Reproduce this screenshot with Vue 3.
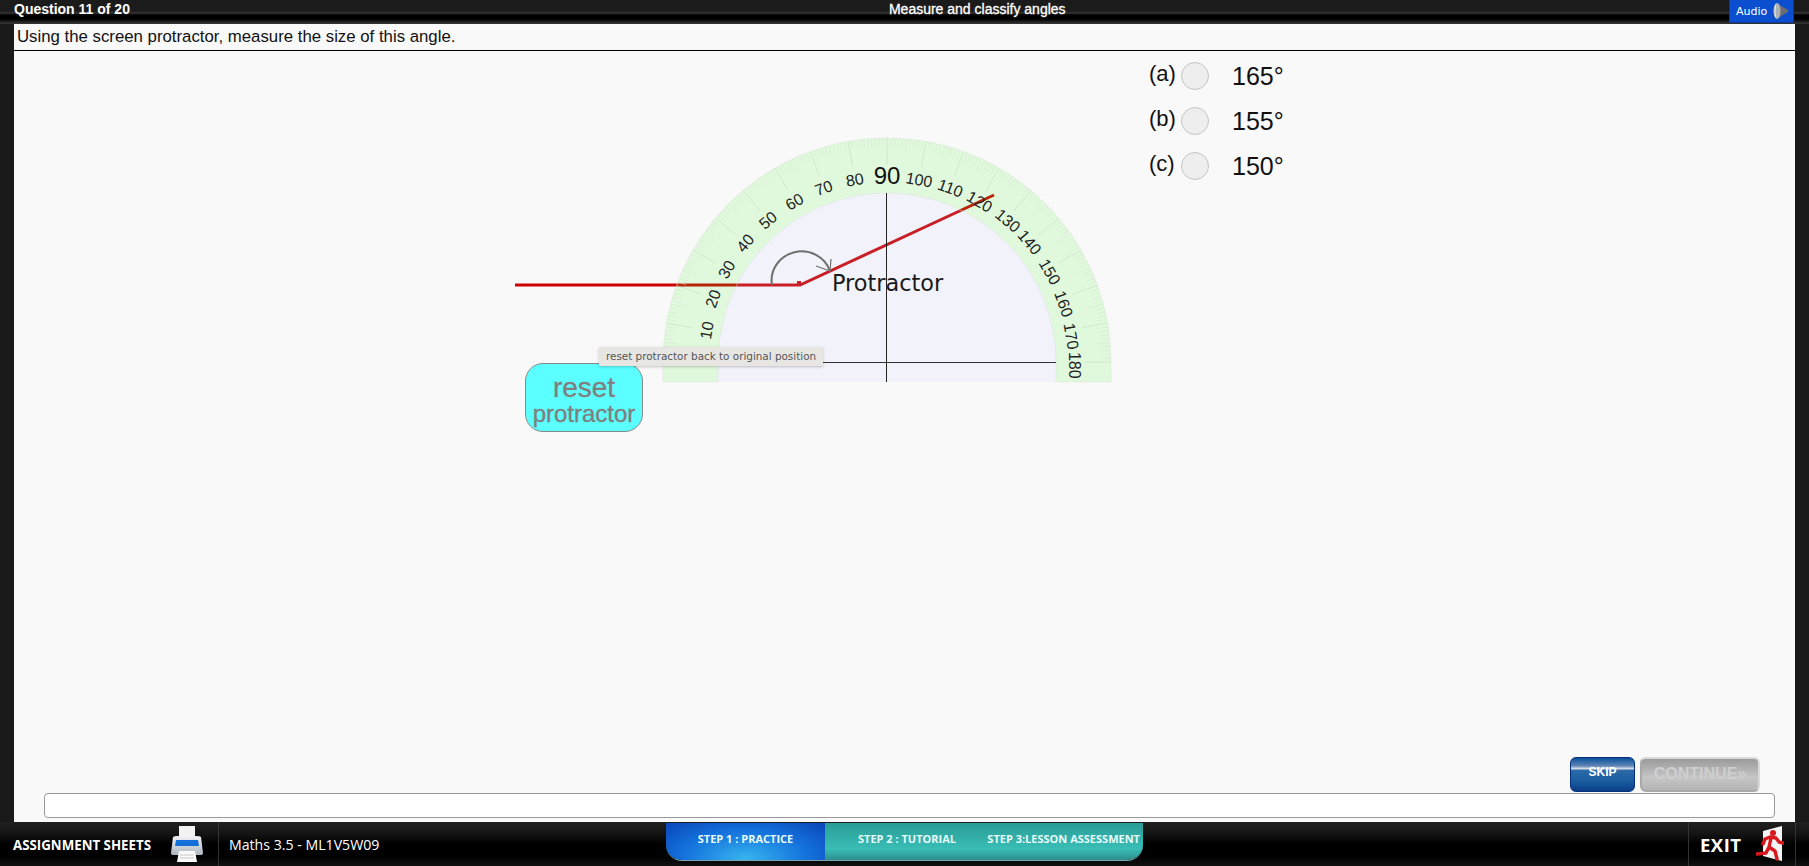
<template>
  <div class="screen">
    <header class="top-bar">
      <div class="top-count">Question 11 of 20</div>
      <div class="top-title">Measure and classify angles</div>
      <div class="audio-btn">
        <span>Audio</span>
        <svg width="16" height="18" viewBox="0 0 16 18">
          <path d="M4 1.5 L15 8 Q15.5 9 15 10 L4 16.5 Z" fill="#6a6d70" />
          <ellipse cx="4" cy="9" rx="3.5" ry="8" fill="#aeb2b6" />
          <path d="M2.6 3 Q1 9 2.6 15" stroke="#e8e8e8" stroke-width="1.1" fill="none" />
        </svg>
      </div>
    </header>

    <main class="middle">
      <div class="question">Using the screen protractor, measure the size of this angle.</div>

      <div class="stage">
        <svg class="protractor" width="620" height="260" viewBox="500 130 620 260">
          <!-- angle lines sit under the see-through protractor -->
          <path d="M515 285 H800 L994 195" fill="none" stroke="#cc0000" stroke-width="3" />
          <rect x="797" y="281" width="4" height="4" fill="#cc0000" />

          <path
            d="M663 362 A224 224 0 0 1 1111 362 V382 H1056 V362 A169 169 0 0 0 718 362 V382 H663 Z"
            fill="rgb(82, 242, 56)"
            fill-opacity="0.15"
            stroke="#dde6da"
            stroke-width="0.5"
          />
          <path
            d="M718 362 A169 169 0 0 1 1056 362 V382 H718 Z"
            fill="rgb(196, 202, 255)"
            fill-opacity="0.15"
          />

          <line
            v-for="t in ticks"
            :key="t.deg"
            :x1="t.x1"
            :y1="t.y1"
            :x2="t.x2"
            :y2="t.y2"
            :stroke="t.color"
            stroke-width="0.5"
          />

          <line x1="886.5" y1="193" x2="886.5" y2="382" stroke="#222" stroke-width="1" />
          <line x1="718" y1="362.5" x2="1056" y2="362.5" stroke="#333" stroke-width="1" />

          <path d="M772 285 A30 29 0 0 1 830 271" fill="none" stroke="#6f6f6f" stroke-width="2" />
          <path d="M816 266 L830 271 L831 259" fill="none" stroke="#6f6f6f" stroke-width="1.2" />

          <text x="832" y="291" class="proto-name">Protractor</text>

          <text
            v-for="l in labels"
            :key="l.deg"
            :x="l.x"
            :y="l.y"
            :transform="`rotate(${l.rot} ${l.x} ${l.y})`"
            :class="l.deg === 90 ? 'deg-big' : 'deg-small'"
            text-anchor="middle"
            dominant-baseline="central"
          >{{ l.deg }}</text>
        </svg>

        <button class="reset-btn">
          <span class="reset-big">reset</span>
          <span class="reset-small">protractor</span>
        </button>
        <div class="reset-tip">reset protractor back to original position</div>

        <div class="options">
          <div v-for="o in options" :key="o.key" class="option">
            <span class="opt-key">({{ o.key }})</span>
            <span class="opt-radio"></span>
            <span class="opt-value">{{ o.value }}°</span>
          </div>
        </div>

        <div class="actions">
          <button class="btn-skip">SKIP</button>
          <button class="btn-continue">CONTINUE»</button>
        </div>
        <div class="feedback"></div>
      </div>
    </main>

    <footer class="bottom-bar">
      <div class="sheets">
        <span>ASSIGNMENT SHEETS</span>
        <svg width="34" height="38" viewBox="0 0 34 38">
          <defs>
            <linearGradient id="printerBody" x1="0" y1="0" x2="0" y2="1">
              <stop offset="0" stop-color="#f0f2f5" />
              <stop offset="1" stop-color="#aeb6be" />
            </linearGradient>
          </defs>
          <path d="M9 1 H25 V14 H9 Z" fill="#f2f2f2" />
          <path d="M3 12 Q4 11 8 11 H26 Q30 11 31 12 L33 28 Q33 30 30 30 H4 Q1 30 1 28 Z" fill="url(#printerBody)" />
          <path d="M6 15 H28 L29 21 H5 Z" fill="#1270d8" />
          <path d="M9 26 H25 L27 37 H7 Z" fill="#fafafa" />
          <path d="M10 30 H24 M10 33 H24" stroke="#c8c8c8" stroke-width="1" />
        </svg>
      </div>
      <div class="course">Maths 3.5 - ML1V5W09</div>
      <nav class="steps">
        <div class="step step-active">STEP 1 : PRACTICE</div>
        <div class="step-rest">
          <span>STEP 2 : TUTORIAL</span>
          <span>STEP 3:LESSON ASSESSMENT</span>
        </div>
      </nav>
      <div class="exit">
        <span>EXIT</span>
        <svg width="28" height="38" viewBox="0 0 28 38">
          <path d="M7 6 L26 1 V36 L7 31 Z" fill="#f4f4f4" />
          <circle cx="17" cy="8" r="3" fill="#d8181c" />
          <path
            d="M14 12 L20 13 L23 17 L27 18 M14 12 L9 14 L7 19 M15 13 L13 22 L19 26 L21 34 M13 22 L10 28 L1 29"
            fill="none"
            stroke="#d8181c"
            stroke-width="3.4"
            stroke-linecap="round"
            stroke-linejoin="round"
          />
        </svg>
      </div>
    </footer>
  </div>
</template>

<script setup>
const options = [
  { key: 'a', value: 165 },
  { key: 'b', value: 155 },
  { key: 'c', value: 150 }
]

const cx = 887
const cy = 362
const point = (deg, r) => {
  const a = (deg * Math.PI) / 180
  return { x: cx - r * Math.cos(a), y: cy - r * Math.sin(a) }
}

// 1 degree marks round the rim, longer ones every 5 and 10
const ticks = []
for (let deg = 0; deg <= 180; deg++) {
  const len = deg % 10 === 0 ? 26 : deg % 5 === 0 ? 14 : 9
  const outer = point(deg, 224)
  const inner = point(deg, 224 - len)
  ticks.push({
    deg,
    x1: outer.x,
    y1: outer.y,
    x2: inner.x,
    y2: inner.y,
    color: deg % 10 === 0 ? '#c2d4c0' : '#d3e7d0'
  })
}

// numbers on the right run a little past their own mark on the original
const labelShift = { 130: 0.5, 150: 1, 160: 1.8, 170: 2, 180: 1 }
const labels = []
for (let deg = 10; deg <= 180; deg += 10) {
  let r = 185
  if (deg === 90) r = 187
  if (deg === 10) r = 183
  if (deg > 120) r = 186
  const p = point(deg + (labelShift[deg] || 0), deg === 180 ? 188 : r)
  labels.push({ deg, x: p.x, y: p.y, rot: deg - 90 })
}
</script>

<style>
html,
body {
  margin: 0;
  background: #1a1a1a;
}
</style>

<style scoped>
.screen {
  width: 1809px;
  height: 866px;
  display: flex;
  flex-direction: column;
  overflow: hidden;
  font-family: "Liberation Sans", Arial, sans-serif;
  background: #1a1a1a;
}

.top-bar {
  height: 24px;
  flex: none;
  display: flex;
  align-items: flex-start;
  padding: 0 15px 0 14px;
  color: #fff;
  font-weight: bold;
  font-size: 14px;
  line-height: 18px;
  background: linear-gradient(#1b1b1b 0, #1b1b1b 11px, #353535 13px, #000 15px, #000 19px, #3a3a3a 24px);
}

.top-title {
  margin-left: 759px;
  font-size: 14px;
  font-weight: normal;
  -webkit-text-stroke: 0.3px #fff;
}

.audio-btn {
  margin-left: auto;
  width: 65px;
  height: 23px;
  display: flex;
  align-items: center;
  gap: 6px;
  padding: 2px 0 0 6px;
  box-sizing: border-box;
  background: #0b4fd0;
  border: 1px solid #0a3a9a;
  border-top: none;
  font-weight: normal;
  font-size: 11px;
  font-family: "DejaVu Sans", sans-serif;
}

.audio-btn svg {
  flex: none;
  margin-top: -2px;
}

.middle {
  flex: 1;
  margin: 0 14px;
  background: #f9f9f9;
  display: flex;
  flex-direction: column;
  min-height: 0;
}

.question {
  height: 26px;
  flex: none;
  padding-left: 3px;
  font-size: 16.8px;
  line-height: 25px;
  color: #111;
  border-bottom: 1px solid #000;
}

.stage {
  flex: 1;
  position: relative;
  display: flex;
  flex-direction: column;
}

.protractor {
  position: absolute;
  left: 486px;
  top: 79px;
}

.proto-name {
  font-family: "DejaVu Sans", Verdana, sans-serif;
  font-size: 22.4px;
  fill: #1a1a1a;
}

.deg-small {
  font-family: "Liberation Sans", Arial, sans-serif;
  font-size: 16px;
  fill: #222;
}

.deg-big {
  font-family: "Liberation Sans", Arial, sans-serif;
  font-size: 24px;
  fill: #111;
}

.reset-btn {
  position: absolute;
  left: 511px;
  top: 312px;
  width: 118px;
  height: 69px;
  padding: 3px 0 0;
  box-sizing: border-box;
  border: 1px solid #888;
  border-radius: 18px;
  background: #5cffff;
  color: #808080;
  font-family: "Liberation Sans", Arial, sans-serif;
  -webkit-text-stroke: 0.4px #808080;
  display: flex;
  flex-direction: column;
  align-items: center;
  justify-content: center;
}

.reset-big {
  font-size: 28px;
  line-height: 29px;
}

.reset-small {
  font-size: 24px;
  line-height: 24px;
}

.reset-tip {
  position: absolute;
  left: 585px;
  top: 296px;
  height: 19px;
  padding: 0 7px;
  line-height: 19px;
  font-family: "DejaVu Sans", sans-serif;
  font-size: 10.4px;
  white-space: nowrap;
  color: #555;
  background: #e8e6e3;
  border-radius: 1px;
  box-shadow: 0 1px 3px rgba(0, 0, 0, 0.22);
}

.options {
  margin: 10px 0 0 1135px;
  display: flex;
  flex-direction: column;
  gap: 15px;
}

.option {
  height: 30px;
  display: flex;
  align-items: center;
  color: #111;
}

.opt-key {
  width: 32px;
  font-size: 22px;
  position: relative;
  top: -2px;
}

.opt-radio {
  width: 28px;
  height: 28px;
  box-sizing: border-box;
  border: 1px solid #c4c4c4;
  border-radius: 50%;
  background: #eeeeee;
}

.opt-value {
  margin-left: 23px;
  font-size: 25px;
}

.actions {
  margin-top: auto;
  margin-right: 35px;
  display: flex;
  justify-content: flex-end;
  gap: 5px;
}

.btn-skip {
  width: 65px;
  height: 35px;
  padding: 0 0 6px;
  border: 1px solid #06307e;
  border-radius: 6px;
  background: linear-gradient(#0b4f9c 0, #5f86b4 24%, #d4dde6 32%, #2b6aa8 38%, #1a5c9e 70%, #0a3f88 100%);
  color: #fff;
  font: bold 12px "Liberation Sans", Arial, sans-serif;
}

.btn-continue {
  width: 120px;
  height: 35px;
  padding: 0 0 2px;
  border: 2px solid #d9d9d9;
  border-left-color: #a8a8a8;
  border-bottom-color: #a8a8a8;
  border-radius: 6px;
  background: linear-gradient(#9a9a9a, #c6c6c6 60%, #b4b4b4);
  color: #cfcfcf;
  font: bold 16px "Liberation Sans", Arial, sans-serif;
}

.feedback {
  margin: 1px 20px 4px 30px;
  height: 25px;
  box-sizing: border-box;
  background: #fff;
  border: 1px solid #999;
  border-radius: 4px;
}

.bottom-bar {
  height: 44px;
  flex: none;
  display: flex;
  align-items: stretch;
  color: #fff;
  font-family: "Open Sans", sans-serif;
  background: linear-gradient(#1f1f1f 0, #141414 12px, #000 22px, #000 34px, #111 44px);
}

.sheets {
  width: 205px;
  display: flex;
  align-items: center;
  gap: 19px;
  padding-left: 13px;
  padding-top: 2px;
  border-right: 1px solid #333;
  font-weight: bold;
  font-size: 13.3px;
  white-space: nowrap;
}

.sheets svg {
  margin-top: -2px;
}

.course {
  width: 437px;
  padding-left: 10px;
  padding-top: 1px;
  line-height: 44px;
  font-size: 14.15px;
}

.steps {
  width: 477px;
  height: 38px;
  margin-top: 1px;
  display: flex;
  font-size: 11px;
  font-weight: bold;
  color: #e8fbfb;
  white-space: nowrap;
  border-radius: 0 0 16px 16px;
  overflow: hidden;
  border-bottom: 1px solid #7fa6b0;
  box-sizing: border-box;
}

.step {
  width: 159px;
  padding-top: 8px;
  box-sizing: border-box;
  text-align: center;
}

.step-active {
  background: radial-gradient(ellipse at 50% 95%, #36b4ee 0, #1472dc 55%, #0a44b8 100%);
}

.step-rest {
  flex: 1;
  display: flex;
  justify-content: space-between;
  padding: 8px 3px 0 33px;
  background: linear-gradient(#2a9d97, #39bdb5 70%, #2c8f8c);
}

.exit {
  margin-left: auto;
  width: 108px;
  margin-right: 13px;
  box-sizing: border-box;
  display: flex;
  align-items: center;
  gap: 14px;
  padding-left: 11px;
  border-left: 1px solid #333;
  border-right: 1px solid #333;
  font-weight: bold;
  font-size: 18.5px;
  letter-spacing: 0.5px;
}
</style>
